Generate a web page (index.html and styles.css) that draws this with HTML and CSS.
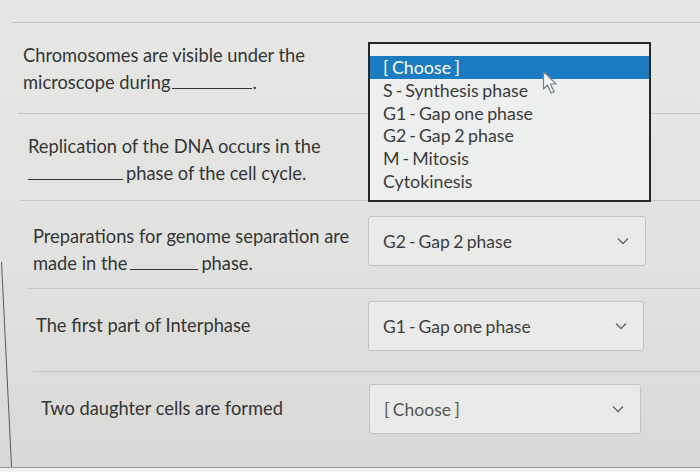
FILE: index.html
```html
<!doctype html>
<html lang="en">
<head>
  <meta charset="UTF-8" />
  <title>Quiz</title>
  <link rel="stylesheet" href="styles.css">
</head>
<body>

<section class="quiz">
  <div class="row row-1">
    <div class="q">Chromosomes are visible under the<br>microscope during<span class="blank"></span>.</div>
    <div class="answer">
      <div class="sel">[ Choose ]</div>
      <!--open list-->
      <ul class="list">
        <li class="active">[ Choose ]</li>
        <li>S<span class="dash">-</span>Synthesis phase</li>
        <li>G1<span class="dash">-</span>Gap one phase</li>
        <li>G2<span class="dash">-</span>Gap 2 phase</li>
        <li>M<span class="dash">-</span>Mitosis</li>
        <li>Cytokinesis</li>
      </ul>
      <svg class="cursor" width="18" height="26" viewBox="0 0 18 26">
        <path d="M1.5,1.5 L1.5,19 L5.5,15 L9,23 L12,21.7 L8.5,14 L14,14 Z" fill="#f4f6f8" stroke="#7b7f83" stroke-width="1.2" stroke-linejoin="round" />
      </svg>
    </div>
  </div>

  <div class="row row-2">
    <div class="q"><br><span class="blank blank-lead"></span>phase of the cell cycle.</div>
    <div class="q q-abs">Replication of the DNA occurs in the</div>
  </div>

  <div class="row row-3">
    <div class="q">Preparations for genome separation are<br>made in the<span class="blank blank-mid"></span>phase.</div>
    <div class="answer">
      <div class="sel"><span>G2<span class="dash">-</span>Gap 2 phase</span><svg class="chev" width="12" height="8" viewBox="0 0 12 8"><polyline points="1,1.5 6,6.5 11,1.5" /></svg></div>
    </div>
  </div>

  <div class="row row-4">
    <div class="q">The first part of Interphase</div>
    <div class="answer">
      <div class="sel"><span>G1<span class="dash">-</span>Gap one phase</span><svg class="chev" width="12" height="8" viewBox="0 0 12 8"><polyline points="1,1.5 6,6.5 11,1.5" /></svg></div>
    </div>
  </div>

  <div class="row row-5">
    <div class="q">Two daughter cells are formed</div>
    <div class="answer">
      <div class="sel sel-empty"><span>[ Choose ]</span><svg class="chev" width="12" height="8" viewBox="0 0 12 8"><polyline points="1,1.5 6,6.5 11,1.5" /></svg></div>
    </div>
  </div>
</section>

</body>
</html>
```
FILE: styles.css
```css
html, body {
  margin: 0;
  padding: 0;
}
* {
  box-sizing: border-box;
}
body {
  width: 700px;
  height: 472px;
  overflow: hidden;
  position: relative;
  font-family: Lato, "Open Sans", sans-serif;
  font-size: 18.3px;
  color: #343535;
  background: linear-gradient(#e7e8e6, #e2e3e0 50%, #d9dad7);
}
/*page edge*/
body:before {
  content: '';
  position: absolute;
  left: 1px;
  top: 262px;
  width: 1px;
  height: 210px;
  background: #5a5c5a;
  transform-origin: top left;
  transform: rotate(-2.8deg);
}
body:after {
  content: '';
  position: absolute;
  left: 0;
  bottom: 0;
  width: 100%;
  height: 4px;
  border-top: 1px solid #9a9b99;
  background: #f2f2f0;
}
.quiz {
  margin: 22px 0 0 0;
}
.row {
  display: flex;
  position: relative;
  border-top: 1px solid #c6c8c5;
}
.q {
  width: 356px;
  line-height: 27px;
  white-space: nowrap;
}
.answer {
  position: relative;
  width: 280px;
}
.blank {
  display: inline-block;
  width: 80px;
  margin-left: 2px;
  border-bottom: 1px solid #343535;
}
.blank-lead {
  width: 95px;
  margin: 0 3px 0 0;
}
.blank-mid {
  width: 68px;
  margin: 0 3px 0 3px;
}
/*rows*/
.row-1 {
  height: 91px;
  margin-left: 12px;
}
.row-1 .q {
  padding: 19px 0 0 11px;
}
.row-2 {
  height: 87px;
  margin-left: 18px;
}
.row-2 .q {
  padding: 19px 0 0 10px;
  width: 350px;
}
.row-2 .q-abs {
  position: absolute;
  left: 0;
  top: 0;
}
.row-3 {
  height: 88px;
  margin-left: 20px;
}
.row-3 .q {
  padding: 22px 0 0 13px;
  width: 348px;
}
.row-3 .answer {
  margin-top: 15px;
  width: 278px;
}
.row-4 {
  height: 83px;
  margin-left: 28px;
}
.row-4 .q {
  padding: 23px 0 0 8px;
  width: 340px;
}
.row-4 .answer {
  margin-top: 12px;
  width: 276px;
}
.row-5 {
  height: 84px;
  margin-left: 33px;
}
.row-5 .q {
  padding: 23px 0 0 8px;
  width: 336px;
}
.row-5 .answer {
  margin-top: 12px;
  width: 272px;
}
/*select*/
.sel {
  display: flex;
  align-items: center;
  justify-content: space-between;
  height: 50px;
  padding: 0 16px 0 14px;
  border: 1px solid #c3c5c2;
  border-radius: 3px;
  background: #eaebe9;
  color: #3c3d3d;
  font-size: 17.5px;
  word-spacing: -1px;
}
.sel-empty {
  color: #555;
}
.dash {
  margin: 0 3px;
}
.chev {
  fill: none;
  stroke: #666;
  stroke-width: 1.4;
}
/*open list*/
.row-1 .answer {
  margin-top: 19px;
}
.list {
  position: absolute;
  left: 0;
  top: 0;
  width: 283px;
  height: 160px;
  margin: 0;
  padding: 12px 0 0 0;
  list-style: none;
  border: 2px solid #262828;
  background: #eef0f0;
  font-size: 17.8px;
  word-spacing: -1px;
  z-index: 2;
}
.list li {
  height: 22.8px;
  line-height: 22px;
  padding-left: 13px;
  color: #3a3b3b;
}
.list li.active {
  background: #1c7cc2;
  color: #fff;
}
.cursor {
  position: absolute;
  left: 174px;
  top: 28px;
  z-index: 3;
}
```
